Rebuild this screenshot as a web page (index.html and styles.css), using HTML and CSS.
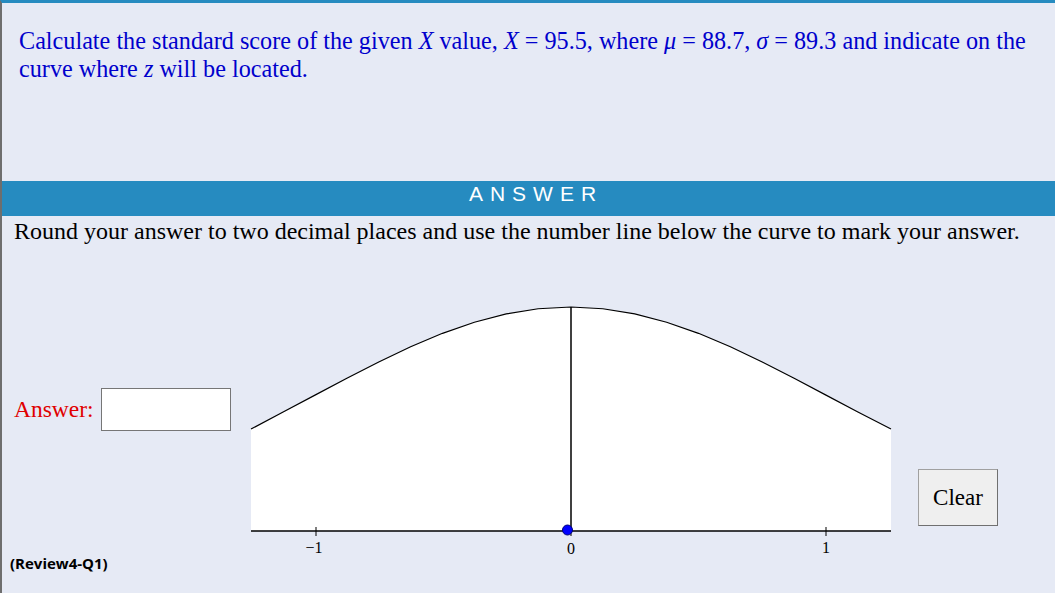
FILE: index.html
```html
<!DOCTYPE html>
<html>
<head>
<meta charset="utf-8">
<link rel="stylesheet" href="styles.css">
</head>
<body>
<div class="page">
  <div class="question">
    Calculate the standard score of the given <i>X</i> value, <i>X</i> = 95.5, where <i>μ</i> = 88.7, <i>σ</i> = 89.3 and indicate on the curve where <i>z</i> will be located.
  </div>
  <div class="answer-bar">ANSWER</div>
  <div class="instruction">Round your answer to two decimal places and use the number line below the curve to mark your answer.</div>
  <div class="work">
    <div class="left">
      <div class="answer-row">
        <span class="answer-label">Answer:</span>
        <input class="answer-input" type="text">
      </div>
      <div class="review">(Review4-Q1)</div>
    </div>
    <svg class="graph" width="660" height="265" viewBox="0 0 660 265">
      <path d="M11,236 L11,134.08 L43.13,117.03 L75,100.14 L106.88,83.25 L138.75,66.92 L170.63,51.74 L202.5,38.32 L234.38,27.21 L266.25,18.89 L298.13,13.74 L331,12 L362.88,13.74 L394.75,18.89 L426.63,27.21 L458.5,38.32 L490.38,51.74 L522.25,66.92 L554.13,83.25 L586,100.14 L617.88,117.03 L651,134.08 L651,236 Z" fill="#ffffff" stroke="none"/>
      <path d="M11,134.08 L43.13,117.03 L75,100.14 L106.88,83.25 L138.75,66.92 L170.63,51.74 L202.5,38.32 L234.38,27.21 L266.25,18.89 L298.13,13.74 L331,12 L362.88,13.74 L394.75,18.89 L426.63,27.21 L458.5,38.32 L490.38,51.74 L522.25,66.92 L554.13,83.25 L586,100.14 L617.88,117.03 L651,134.08" fill="none" stroke="#000" stroke-width="1.2"/>
      <line x1="331" y1="12" x2="331" y2="236" stroke="#000" stroke-width="1.5"/>
      <line x1="11" y1="236" x2="651" y2="236" stroke="#000" stroke-width="1.5"/>
      <line x1="76" y1="232" x2="76" y2="241" stroke="#000" stroke-width="1"/>
      <line x1="331" y1="232" x2="331" y2="241" stroke="#000" stroke-width="1"/>
      <line x1="586" y1="232" x2="586" y2="241" stroke="#000" stroke-width="1"/>
      <text x="74" y="258" class="tick-label" text-anchor="middle">−1</text>
      <text x="331" y="259" class="tick-label" text-anchor="middle">0</text>
      <text x="586" y="258" class="tick-label" text-anchor="middle">1</text>
      <circle cx="327.5" cy="235" r="5" fill="#0000ff" stroke="#00007a" stroke-width="1"/>
    </svg>
    <div class="right">
      <button class="clear-btn" type="button">Clear</button>
    </div>
  </div>
</div>
</body>
</html>
```

FILE: styles.css
```css
html, body {
  margin: 0;
  padding: 0;
  background: #e6eaf5;
}
.page {
  box-sizing: border-box;
  width: 1055px;
  height: 593px;
  border-top: 3px solid #268bc0;
  border-left: 2px solid #6e6e6e;
  background: #e6eaf5;
  overflow: hidden;
}
.question {
  box-sizing: border-box;
  height: 178px;
  padding: 24px 8px 0 17px;
  font-family: "Liberation Serif", "Times New Roman", serif;
  font-size: 24.2px;
  line-height: 28px;
  color: #0000cc;
}
.answer-bar {
  box-sizing: border-box;
  height: 35px;
  padding-left: 15px;
  background: #268bc0;
  color: #ffffff;
  text-align: center;
  font-family: "Liberation Sans", Arial, sans-serif;
  font-size: 21px;
  line-height: 26px;
  letter-spacing: 7px;
}
.instruction {
  padding-left: 12px;
  font-family: "Liberation Serif", "Times New Roman", serif;
  font-size: 24px;
  line-height: 31px;
  color: #000;
}
.work {
  display: flex;
  margin-top: 48px;
  height: 280px;
}
.left {
  width: 238px;
  display: flex;
  flex-direction: column;
}
.answer-row {
  display: flex;
  align-items: center;
  margin-top: 93px;
  padding-left: 12px;
}
.answer-label {
  width: 87px;
  font-family: "Liberation Serif", "Times New Roman", serif;
  font-size: 23.5px;
  color: #e00000;
}
.answer-input {
  box-sizing: border-box;
  width: 130px;
  height: 43px;
  border: 1px solid #767676;
  background: #fff;
  margin: 0;
  padding: 0;
}
.review {
  margin-top: auto;
  padding-left: 8px;
  padding-bottom: 2px;
  font-family: "Open Sans", "Liberation Sans", sans-serif;
  font-weight: 700;
  font-size: 15px;
  line-height: 20px;
}
.graph {
  display: block;
}
.tick-label {
  font-family: "Liberation Serif", "Times New Roman", serif;
  font-size: 16px;
  fill: #000;
}
.right {
  padding-left: 18px;
  padding-top: 174px;
}
.clear-btn {
  box-sizing: border-box;
  width: 80px;
  height: 57px;
  background: #efefef;
  border: 1px solid #a0a0a0;
  border-right-color: #707070;
  border-bottom-color: #707070;
  font-family: "Liberation Serif", "Times New Roman", serif;
  font-size: 23px;
  color: #000;
  padding: 0;
}
```
